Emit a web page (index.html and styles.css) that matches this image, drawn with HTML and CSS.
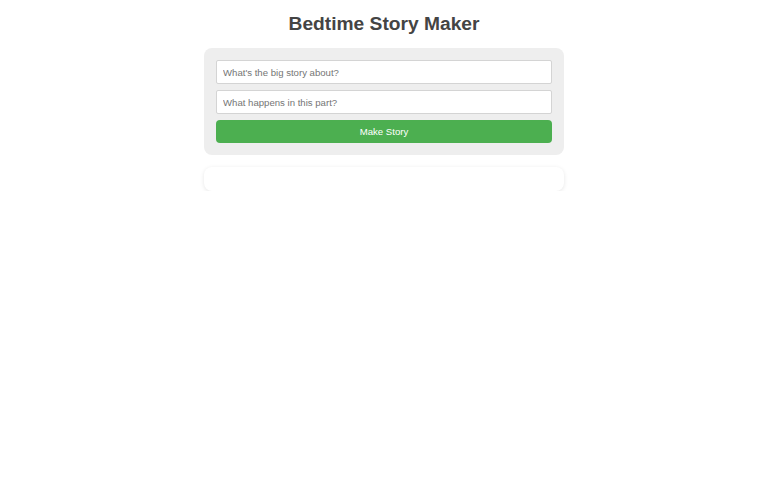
FILE: index.html
```html
<!DOCTYPE html>
<html lang="en">
<head>
    <meta charset="UTF-8">
    <meta name="viewport" content="width=device-width, initial-scale=1.0">
    <title>Bedtime Story Maker</title>
    <link rel="stylesheet" href="styles.css">
</head>
<body>
    <div class="wrap">
        <h1>Bedtime Story Maker</h1>
        <div class="form-box">
            <input type="text" class="field" placeholder="What's the big story about?">
            <input type="text" class="field" placeholder="What happens in this part?">
            <button class="make-btn">Make Story</button>
        </div>
        <div class="story"></div>
    </div>
</body>
</html>
```

FILE: styles.css
```css
body {
    margin: 0;
    font-family: "Liberation Sans", Arial, sans-serif;
    background: #fff;
}
.wrap {
    width: 360px;
    margin: 0 auto;
}
h1 {
    font-size: 19.2px;
    color: #444;
    text-align: center;
    margin: 12px 0 13px;
    line-height: 23px;
}
.form-box {
    background: #eee;
    border-radius: 8px;
    padding: 12px;
    display: flex;
    flex-direction: column;
    gap: 6px;
}
.field {
    height: 24px;
    box-sizing: border-box;
    border: 1px solid #d4d4d4;
    border-radius: 2px;
    padding: 0 6px;
    font-family: "Liberation Sans", Arial, sans-serif;
    font-size: 9.6px;
    color: #333;
    background: #fff;
    outline: none;
}
.field::placeholder {
    color: #757575;
}
.make-btn {
    height: 23px;
    border: none;
    border-radius: 4px;
    background: #4caf50;
    color: #fff;
    font-family: "Liberation Sans", Arial, sans-serif;
    font-size: 9.6px;
    cursor: pointer;
}
.story {
    margin-top: 12px;
    background: #fff;
    border-radius: 8px;
    padding: 12px;
    box-shadow: 0 1px 4px rgba(0, 0, 0, 0.1);
}
```
